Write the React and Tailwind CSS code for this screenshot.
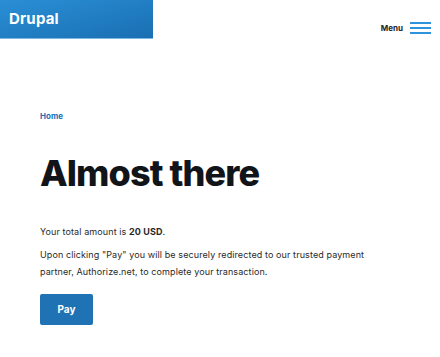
export default function App() {
  return (
    <div className="w-[440px] h-[357px] bg-white overflow-hidden" style={{ fontFamily: "Inter, 'Noto Sans', sans-serif" }}>
      <header className="flex items-start justify-between">
        <div className="w-[153px] h-[39px] bg-gradient-to-br from-[#2a8fd6] to-[#1a6fb2] border-b border-[#7cb8e6] flex items-center pl-[9px]">
          <span className="text-white font-bold text-[15px] tracking-[0.2px]">Drupal</span>
        </div>
        <div className="flex items-center h-[39px] pt-[17px] pr-[9px] gap-[7px]">
          <span className="text-[8px] font-bold text-[#222]">Menu</span>
          <div className="flex flex-col gap-[3px] w-[21px]">
            <span className="block h-[2px] bg-[#2d93dc]" />
            <span className="block h-[2px] bg-[#2d93dc]" />
            <span className="block h-[2px] bg-[#2d93dc]" />
          </div>
        </div>
      </header>
      <main className="px-10 pt-[71px]">
        <a className="block text-[8px] font-bold text-[#1b6fb5] leading-[12px]">Home</a>
        <h1 className="mt-[29px] text-[36px] font-extrabold text-[#111418] leading-[44px] tracking-[-0.9px]">Almost there</h1>
        <p className="mt-[28px] text-[9px] text-[#2a2a2a] leading-[17px] tracking-[0.1px]">
          Your total amount is <strong className="font-bold">20 USD</strong>.
        </p>
        <p className="mt-[6px] max-w-[345px] text-[9px] text-[#2a2a2a] leading-[17px] tracking-[0.1px]">
          Upon clicking "Pay" you will be securely redirected to our trusted payment partner, Authorize.net, to complete your transaction.
        </p>
        <button className="mt-[14px] w-[53px] h-[31px] rounded-[2px] bg-[#1f73b5] text-white text-[10px] font-bold">Pay</button>
      </main>
    </div>
  );
}
